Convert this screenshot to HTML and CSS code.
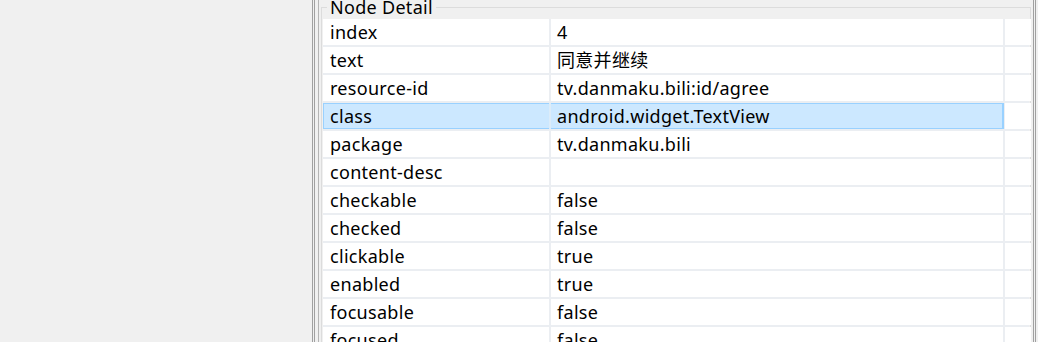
FILE: index.html
```html
<!DOCTYPE html>
<html>
<head>
<meta charset="utf-8">
<link rel="stylesheet" href="styles.css">
</head>
<body>
<div class="app">
  <div class="left-pane"></div>
  <div class="splitter"></div>
  <div class="groupbox">
    <span class="legend">Node Detail</span>
    <div class="table">
      <div class="row"><div class="main"><div class="cell key">index</div><div class="cell val">4</div></div><div class="cell extra"></div></div>
      <div class="row"><div class="main"><div class="cell key">text</div><div class="cell val">同意并继续</div></div><div class="cell extra"></div></div>
      <div class="row"><div class="main"><div class="cell key">resource-id</div><div class="cell val">tv.danmaku.bili:id/agree</div></div><div class="cell extra"></div></div>
      <div class="row sel"><div class="main"><div class="cell key">class</div><div class="cell val">android.widget.TextView</div></div><div class="cell extra"></div></div>
      <div class="row"><div class="main"><div class="cell key">package</div><div class="cell val">tv.danmaku.bili</div></div><div class="cell extra"></div></div>
      <div class="row"><div class="main"><div class="cell key">content-desc</div><div class="cell val"></div></div><div class="cell extra"></div></div>
      <div class="row"><div class="main"><div class="cell key">checkable</div><div class="cell val">false</div></div><div class="cell extra"></div></div>
      <div class="row"><div class="main"><div class="cell key">checked</div><div class="cell val">false</div></div><div class="cell extra"></div></div>
      <div class="row"><div class="main"><div class="cell key">clickable</div><div class="cell val">true</div></div><div class="cell extra"></div></div>
      <div class="row"><div class="main"><div class="cell key">enabled</div><div class="cell val">true</div></div><div class="cell extra"></div></div>
      <div class="row"><div class="main"><div class="cell key">focusable</div><div class="cell val">false</div></div><div class="cell extra"></div></div>
      <div class="row"><div class="main"><div class="cell key">focused</div><div class="cell val">false</div></div><div class="cell extra"></div></div>
    </div>
  </div>
  <div class="edge"></div>
</div>
</body>
</html>
```
FILE: styles.css
```css
html, body {
  margin: 0;
  padding: 0;
  background: #f0f0f0;
  overflow: hidden;
}
body {
  width: 1038px;
  height: 342px;
  font-family: "Noto Sans", "Noto Sans CJK SC", sans-serif;
  font-size: 18px;
  letter-spacing: 0.3px;
  color: #000;
}
.app {
  display: flex;
  height: 342px;
  align-items: flex-start;
}
.left-pane {
  width: 312px;
  height: 342px;
  flex: none;
}
.splitter {
  width: 9px;
  height: 342px;
  flex: none;
  background: linear-gradient(to right,
    #a0a0a0 0 1px, #f0f0f0 1px 2px, #a0a0a0 2px 3px,
    #f0f0f0 3px 6px, #b4b4b4 6px 7px, #f0f0f0 7px);
}
.groupbox {
  position: relative;
  flex: none;
  width: 710px;
  margin-top: 7px;
  height: 400px;
  border: 1px solid #dcdcdc;
  padding: 11px 1px 0 1px;
  box-sizing: border-box;
}
.legend {
  position: absolute;
  top: -11px;
  left: 5px;
  padding: 0 3px;
  line-height: 20px;
  background: #f0f0f0;
  white-space: nowrap;
}
.table {
  display: flex;
  flex-direction: column;
  gap: 2px;
  background: #ebeef2;
}
.row {
  display: flex;
  gap: 2px;
  height: 26px;
}
.main {
  display: flex;
  gap: 2px;
  width: 680px;
  flex: none;
}
.cell {
  background: #fff;
  height: 26px;
  padding-top: 1px;
  line-height: 25px;
  box-sizing: border-box;
  white-space: nowrap;
  overflow: hidden;
}
.key {
  width: 226px;
  padding-left: 7px;
  flex: none;
}
.val {
  width: 452px;
  padding-left: 6px;
  flex: none;
}
.extra {
  width: 26px;
  flex: none;
}
.row.sel .main {
  gap: 0;
  background: #cce8ff;
  box-shadow: inset 0 0 0 1px #99d1ff, 1px 0 0 0 #99d1ff;
}
.row.sel .main .cell {
  background: transparent;
}
.row.sel .key {
  border-right: 2px solid #dcecf9;
  width: 228px;
}
.edge {
  width: 6px;
  height: 342px;
  flex: none;
  background: linear-gradient(to right,
    #f0f0f0 0 2px, #a0a0a0 2px 3px, #f0f0f0 3px 4px, #a0a0a0 4px 5px, #f0f0f0 5px);
}
```
